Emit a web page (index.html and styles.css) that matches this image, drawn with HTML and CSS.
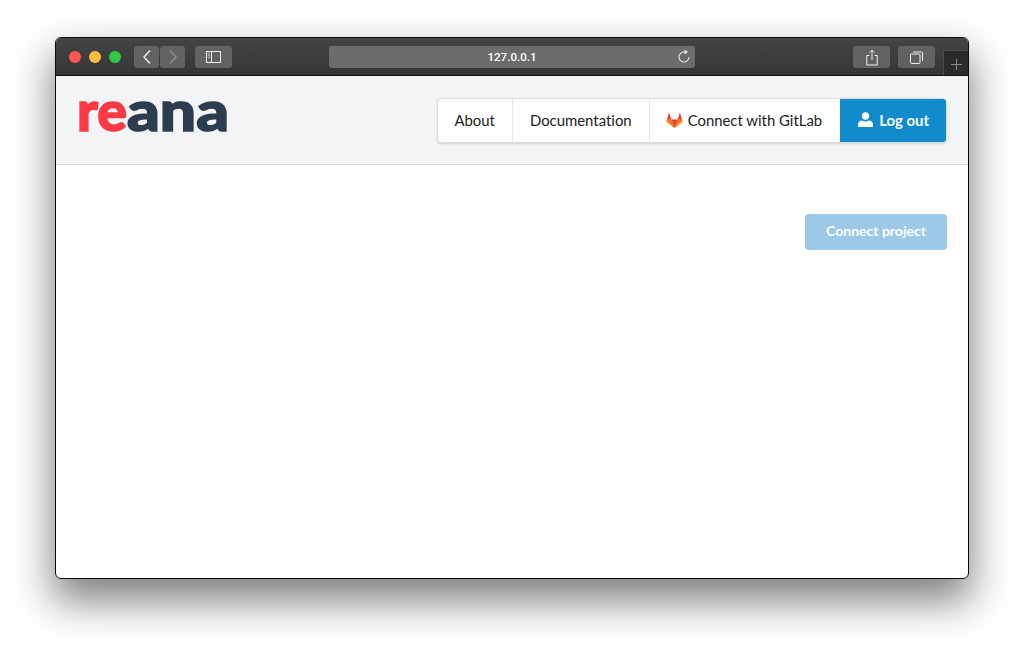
FILE: index.html
```html
<!DOCTYPE html>
<html lang="en">
<head>
<meta charset="utf-8">
<title>REANA</title>
<link rel="stylesheet" href="styles.css">
</head>
<body>
<div class="window">
  <div class="titlebar">
    <div class="lights">
      <span class="light red"></span><span class="light yellow"></span><span class="light green"></span>
    </div>
    <div class="nav-pair">
      <span class="tb-btn nav-btn"><svg width="10" height="16" viewBox="0 0 10 16"><path d="M8 1.5 L2 8 L8 14.5" fill="none" stroke="#f2f2f2" stroke-width="1.4"/></svg></span>
      <span class="tb-btn nav-btn"><svg width="10" height="16" viewBox="0 0 10 16"><path d="M2 1.5 L8 8 L2 14.5" fill="none" stroke="#8e8e8e" stroke-width="1.4"/></svg></span>
    </div>
    <span class="tb-btn wide sidebar"><svg width="15" height="12" viewBox="0 0 15 12"><rect x=".5" y=".5" width="14" height="11" fill="none" stroke="#eee"/><path d="M5.5 0.5V11.5" stroke="#eee"/><path d="M1.8 2.8H4M1.8 4.8H4M1.8 6.8H4" stroke="#ccc"/></svg></span>
    <div class="address">
      <span class="url">127.0.0.1</span>
      <svg class="reload" width="14" height="15" viewBox="0 0 14 15"><path d="M7.5 3 A5 5 0 1 0 12 8" fill="none" stroke="#e6e6e6" stroke-width="1.1"/><path d="M7.5 .5 L11 3 L7.5 5.5Z" fill="#e6e6e6"/></svg>
    </div>
    <span class="tb-btn wide share"><svg width="12" height="17" viewBox="0 0 12 17"><path d="M3.5 6.5H.8V16H11.2V6.5H8.5" fill="none" stroke="#eee"/><path d="M6 11V1.2M3.5 3.6 6 1.1 8.5 3.6" fill="none" stroke="#eee"/></svg></span>
    <span class="tb-btn wide tabs"><svg width="13" height="13" viewBox="0 0 13 13"><rect x=".5" y="3" width="9.5" height="9.5" rx="1" fill="none" stroke="#eee"/><path d="M3 1H11.5a1 1 0 0 1 1 .5V10" fill="none" stroke="#eee"/></svg></span>
    <span class="new-tab"><svg width="11" height="11" viewBox="0 0 11 11"><path d="M5.5 0V11M0 5.5H11" stroke="#8a8a8a"/></svg></span>
  </div>
  <header class="app-header">
    <svg class="logo" width="152" height="76" viewBox="0 0 152 76" role="img" aria-label="reana">
      <text class="logo-re" x="0" y="57" textLength="50" lengthAdjust="spacingAndGlyphs">re</text>
      <text class="logo-ana" x="50" y="57" textLength="102" lengthAdjust="spacingAndGlyphs">ana</text>
    </svg>
    <nav class="menu">
      <a class="item">About</a>
      <a class="item">Documentation</a>
      <a class="item item-gitlab">
        <svg class="gitlab" width="17" height="16" viewBox="0 0 17 16">
          <path d="M8.5 16 .4 9.8 1 7.6Z" fill="#fc6d26"/>
          <path d="M8.5 16 16.6 9.8 16 7.6Z" fill="#fc6d26"/>
          <path d="M8.5 16 .4 9.8C.2 9.5.2 9.2.4 8.8L1 7.6 5.4 7.6Z" fill="#fca326"/>
          <path d="M8.5 16 16.6 9.8C16.8 9.5 16.8 9.2 16.6 8.8L16 7.6 11.6 7.6Z" fill="#fca326"/>
          <path d="M8.5 16 5.4 7.6H11.6Z" fill="#e24329"/>
          <path d="M8.5 16 1 7.6H5.4Z" fill="#fc6d26"/>
          <path d="M8.5 16 16 7.6H11.6Z" fill="#fc6d26"/>
          <path d="M1 7.6 3 .5 5.4 7.6Z" fill="#e24329"/>
          <path d="M16 7.6 14 .5 11.6 7.6Z" fill="#e24329"/>
        </svg>
        Connect with GitLab
      </a>
      <a class="item logout">
        <svg class="user" width="15" height="15" viewBox="0 0 15 15"><circle cx="7.5" cy="4" r="3.7" fill="#fff"/><path d="M0 15V12.4C0 10 2 8.6 4 8.6 5 9.2 6.2 9.5 7.5 9.5S10 9.2 11 8.6C13 8.6 15 10 15 12.4V15Z" fill="#fff"/></svg>
        Log out
      </a>
    </nav>
  </header>
  <main class="content">
    <button class="connect">Connect project</button>
  </main>
</div>
</body>
</html>
```
FILE: styles.css
```css
* { box-sizing: border-box; }
html, body { margin: 0; height: 100%; }
body {
  background: #fff;
  padding: 37px 55px 0;
  overflow: hidden;
  font-family: Lato, "Liberation Sans", sans-serif;
}
.window {
  width: 914px;
  height: 542px;
  border: 1px solid #0c0c0c;
  border-radius: 6px;
  overflow: hidden;
  background: #fff;
  display: flex;
  flex-direction: column;
  box-shadow: 0 20px 40px 2px rgba(0,0,0,.5);
}
.titlebar {
  height: 38px;
  flex: none;
  display: flex;
  align-items: flex-start;
  padding-top: 8px;
  background: linear-gradient(#444, #363636);
  border-bottom: 1px solid #0f0f0f;
  position: relative;
}
.lights { display: flex; gap: 8px; margin: 5px 0 0 13px; }
.light { width: 12px; height: 12px; border-radius: 50%; }
.red { background: #fc5753; }
.yellow { background: #fdbc40; }
.green { background: #33c748; }
.nav-pair { display: flex; gap: 1px; margin-left: 13px; }
.tb-btn {
  height: 22px;
  background: #626262;
  border-radius: 3px;
  display: flex;
  align-items: center;
  justify-content: center;
}
.nav-btn { width: 25px; }
.wide { width: 37px; }
.sidebar { margin-left: 10px; }
.address {
  width: 366px;
  height: 22px;
  margin-left: 97px;
  background: #6c6c6c;
  border-radius: 3px;
  display: flex;
  align-items: center;
  justify-content: center;
  position: relative;
}
.url { color: #fff; font-size: 11.6px; font-family: Roboto, sans-serif; font-weight: 500; }
.reload { position: absolute; right: 4px; top: 3px; }
.share { margin-left: 158px; }
.tabs { margin-left: 8px; }
.new-tab {
  position: absolute;
  right: 0;
  top: 12px;
  width: 25px;
  height: 25px;
  background: #2b2b2b;
  border-left: 1px solid #4d4d4d;
  border-top: 1px solid #4d4d4d;
  display: flex;
  align-items: center;
  justify-content: center;
  padding-top: 2px;
}
.app-header {
  height: 89px;
  flex: none;
  background: #f3f4f6;
  border-bottom: 1px solid #d6d7d9;
  display: flex;
  justify-content: space-between;
  align-items: flex-start;
  padding: 22px 21px 0 21px;
}
.logo { display: block; margin: -24px 0 -24px 0; flex: none; }
.logo-re, .logo-ana {
  font-family: Lato, sans-serif;
  font-weight: 900;
  font-size: 56px;
  stroke-width: 1.6;
}
.logo-re { fill: #fe3a45; stroke: #fe3a45; }
.logo-ana { fill: #2c3d50; stroke: #2c3d50; }
.menu {
  display: flex;
  height: 45px;
  background: #fff;
  border: 1px solid #dcdde0;
  border-radius: 4px;
  box-shadow: 0 1px 2px rgba(34,36,38,.15);
  font-size: 14.9px;
  font-variant-ligatures: none;
  color: #212121;
  overflow: hidden;
}
.item {
  display: flex;
  align-items: center;
  padding: 0 17px 2px;
  border-left: 1px solid #e8e8e9;
}
.item:first-child { border-left: 0; padding-left: 16px; }
.item-gitlab { padding-right: 18px; }
.gitlab { margin-right: 5px; margin-left: -1px; }
.logout {
  background: #108bcb;
  color: #fff;
  font-weight: 700;
  border-left: 0;
  padding: 0 17px 2px 18px;
}
.user { margin-right: 6px; }
.content {
  flex: 1;
  display: flex;
  justify-content: flex-end;
  align-items: flex-start;
  padding: 49px 21px 0 0;
}
.connect {
  width: 142px;
  height: 36px;
  border: 0;
  border-radius: 4px;
  background: #9dc9e8;
  color: #fff;
  font: 700 14px Lato, sans-serif;
  font-variant-ligatures: none;
  padding: 0 0 3px;
}
```
